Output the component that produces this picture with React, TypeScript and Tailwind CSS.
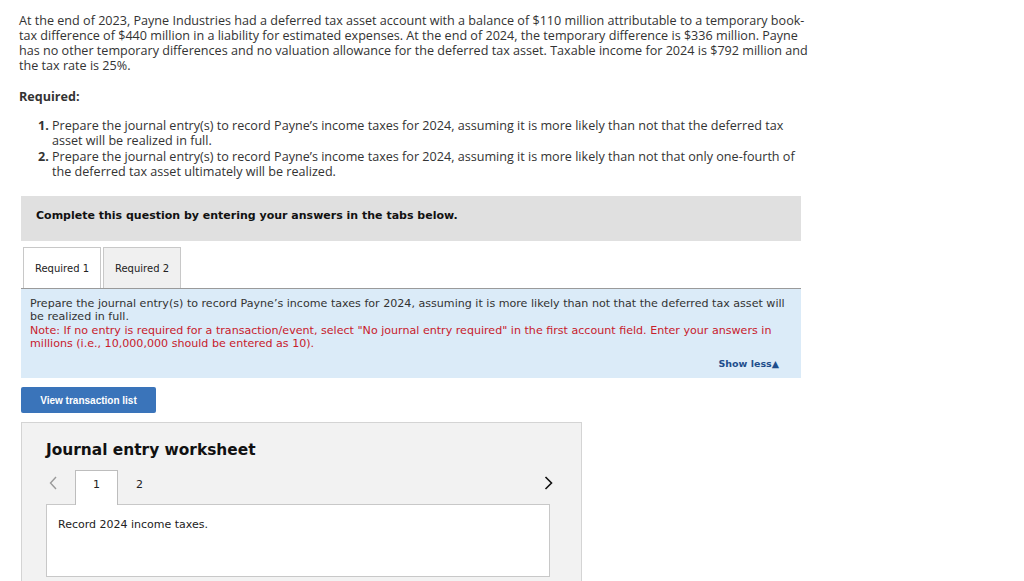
export default function App() {
  const body = { fontFamily: '"Open Sans", "Liberation Sans", sans-serif' };
  const verdana = { fontFamily: '"DejaVu Sans", Verdana, sans-serif' };

  return (
    <div className="min-h-[581px] bg-white text-[#333]">
      <div className="pl-[19px] pt-[13px]" style={body}>
        <p className="w-[790px] text-[12.6px] leading-[15px]">
          At the end of 2023, Payne Industries had a deferred tax asset account with a balance of $110 million attributable to a temporary book-tax difference of $440 million in a liability for estimated expenses. At the end of 2024, the temporary difference is $336 million. Payne has no other temporary differences and no valuation allowance for the deferred tax asset. Taxable income for 2024 is $792 million and the tax rate is 25%.
        </p>
        <p className="mt-[16px] text-[12.6px] font-bold leading-[15px]">Required:</p>
        <ol className="mt-[14px] w-[780px] text-[12.6px] leading-[15px]">
          <li className="flex pl-[19px]">
            <span className="w-[14px] shrink-0 font-bold">1.</span>
            <span>
              Prepare the journal entry(s) to record Payne’s income taxes for 2024, assuming it is more likely than not that the deferred tax asset will be realized in full.
            </span>
          </li>
          <li className="mt-[1px] flex pl-[19px]">
            <span className="w-[14px] shrink-0 font-bold">2.</span>
            <span>
              Prepare the journal entry(s) to record Payne’s income taxes for 2024, assuming it is more likely than not that only one-fourth of the deferred tax asset ultimately will be realized.
            </span>
          </li>
        </ol>
      </div>

      <div className="ml-[21px] w-[780px]" style={verdana}>
        <div className="mt-[17px] h-[45px] bg-[#e0e0e0] pl-[15px] pt-[13px]">
          <p className="text-[11px] font-bold leading-[13px] text-[#111]">
            Complete this question by entering your answers in the tabs below.
          </p>
        </div>

        <div className="mt-[6px] flex gap-[2px] pl-[2px]">
          <div className="flex h-[41px] w-[78px] items-center justify-center border border-b-0 border-[#c8c8c8] bg-white text-[10px] text-[#222]">
            Required 1
          </div>
          <div className="flex h-[41px] w-[78px] items-center justify-center border border-b-0 border-[#c8c8c8] bg-[#f0f0f0] text-[10px] text-[#222]">
            Required 2
          </div>
        </div>

        <div className="h-[90px] border-t border-[#9a9a9a] bg-[#dbebf8] pl-[9px] pr-[12px] pt-[8px] text-[11.1px] leading-[13.4px]">
          <p className="text-[#333]">
            Prepare the journal entry(s) to record Payne’s income taxes for 2024, assuming it is more likely than not that the deferred tax asset will be realized in full.
          </p>
          <p className="text-[#c8202c]">
            Note: If no entry is required for a transaction/event, select "No journal entry required" in the first account field. Enter your answers in millions (i.e., 10,000,000 should be entered as 10).
          </p>
          <div className="mt-[7px] flex justify-end pr-[10px]">
            <span className="text-[9.5px] font-bold leading-[12px] text-[#1f4e8c]">Show less▲</span>
          </div>
        </div>

        <button className="mt-[9px] flex h-[26px] w-[135px] items-center justify-center rounded-[2px] bg-[#3a74ba] text-[10px] font-bold text-white" style={{ fontFamily: '"Liberation Sans", Arial, sans-serif' }}>
          View transaction list
        </button>

        <div className="mt-[9px] h-[170px] w-[561px] border border-[#d4d4d4] bg-[#f2f2f2] pl-[24px] pt-[17px]">
          <h2 className="text-[15.4px] font-bold leading-[20px] text-[#111]">Journal entry worksheet</h2>
          <div className="mt-[10px] flex h-[34px] w-[504px] items-start">
            <div className="flex w-[29px] pl-[3px] pt-[6px]">
              <svg width="8" height="14" viewBox="0 0 8 14" fill="none">
                <polyline points="7,1 1.5,7 7,13" stroke="#9a9a9a" strokeWidth="1.4" />
              </svg>
            </div>
            <div className="relative z-10 flex h-[35px] w-[43px] justify-center border border-b-0 border-[#bdbdbd] bg-white pt-[7px] text-[11px] leading-[13px] text-[#222]">
              1
            </div>
            <div className="flex w-[43px] justify-center pt-[8px] text-[11px] leading-[13px] text-[#222]">2</div>
            <div className="ml-auto flex pt-[6px]">
              <svg width="9" height="14" viewBox="0 0 9 14" fill="none" className="mr-[-3px]">
                <polyline points="1.5,1 7.5,7 1.5,13" stroke="#111" strokeWidth="1.6" />
              </svg>
            </div>
          </div>
          <div className="h-[73px] w-[504px] border border-[#c8c8c8] bg-white pl-[11px] pt-[12px] text-[11px] text-[#222]">
            Record 2024 income taxes.
          </div>
        </div>
      </div>
    </div>
  );
}
